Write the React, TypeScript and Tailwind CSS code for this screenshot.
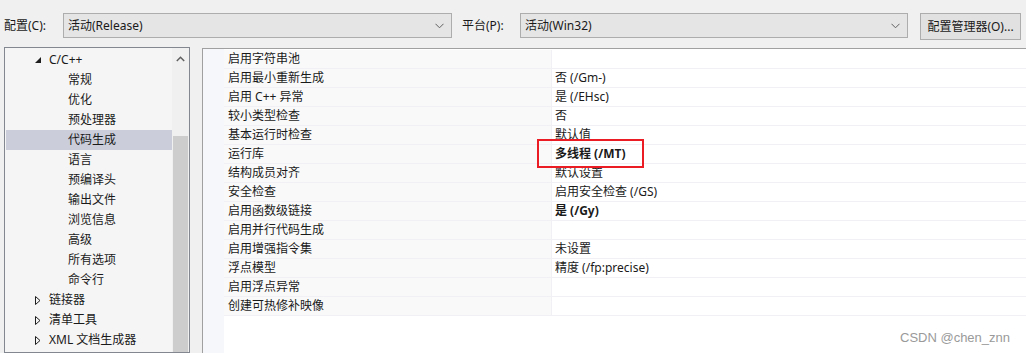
import React from "react";

const font = { fontFamily: '"Segoe UI", "Noto Sans", "Noto Sans CJK SC", sans-serif' };

const treeItems: { label: string; level: number; icon?: "open" | "closed"; selected?: boolean }[] = [
  { label: "C/C++", level: 1, icon: "open" },
  { label: "常规", level: 2 },
  { label: "优化", level: 2 },
  { label: "预处理器", level: 2 },
  { label: "代码生成", level: 2, selected: true },
  { label: "语言", level: 2 },
  { label: "预编译头", level: 2 },
  { label: "输出文件", level: 2 },
  { label: "浏览信息", level: 2 },
  { label: "高级", level: 2 },
  { label: "所有选项", level: 2 },
  { label: "命令行", level: 2 },
  { label: "链接器", level: 1, icon: "closed" },
  { label: "清单工具", level: 1, icon: "closed" },
  { label: "XML 文档生成器", level: 1, icon: "closed" },
];

const props: { name: string; value: string; bold?: boolean }[] = [
  { name: "启用字符串池", value: "" },
  { name: "启用最小重新生成", value: "否 (/Gm-)" },
  { name: "启用 C++ 异常", value: "是 (/EHsc)" },
  { name: "较小类型检查", value: "否" },
  { name: "基本运行时检查", value: "默认值" },
  { name: "运行库", value: "多线程 (/MT)", bold: true },
  { name: "结构成员对齐", value: "默认设置" },
  { name: "安全检查", value: "启用安全检查 (/GS)" },
  { name: "启用函数级链接", value: "是 (/Gy)", bold: true },
  { name: "启用并行代码生成", value: "" },
  { name: "启用增强指令集", value: "未设置" },
  { name: "浮点模型", value: "精度 (/fp:precise)" },
  { name: "启用浮点异常", value: "" },
  { name: "创建可热修补映像", value: "" },
];

function Chevron() {
  return (
    <svg width="9" height="6" viewBox="0 0 9 6" className="shrink-0">
      <path d="M0.5 0.8 L4.5 4.8 L8.5 0.8" fill="none" stroke="#606060" strokeWidth="1" />
    </svg>
  );
}

function Combo({ text, width }: { text: string; width: string }) {
  return (
    <div className={`${width} h-[25px] bg-[#e5e5e5] border border-[#adadad] flex items-center justify-between pl-[4px] pr-[7px] text-[12px] text-[#1a1a1a]`}>
      <span>{text}</span>
      <Chevron />
    </div>
  );
}

export default function App() {
  return (
    <div className="w-[1026px] h-[353px] bg-[#f0f0f0] overflow-hidden relative text-[#1a1a1a]" style={font}>
      {/* top bar */}
      <div className="h-[47px] flex items-start pt-[13px] pl-[4px] text-[12px]">
        <div className="w-[59px] h-[25px] flex items-center">配置(C):</div>
        <Combo text="活动(Release)" width="w-[389px]" />
        <div className="w-[58px] h-[25px] flex items-center ml-[10px]">平台(P):</div>
        <Combo text="活动(Win32)" width="w-[388px]" />
        <div className="ml-[12px] w-[101px] h-[27px] bg-[#e1e1e1] border border-[#adadad] flex items-center justify-center">
          配置管理器(O)...
        </div>
      </div>

      <div className="flex items-start">
        {/* left tree panel */}
        <div className="ml-[4px] w-[186px] h-[306px] border border-[#828790] bg-[#f5f5f5] flex">
          <div className="w-[167px] pt-[2px] pl-[1px]">
            {treeItems.map((t, i) => (
              <div
                key={i}
                className={`h-[20px] flex items-center text-[12px] ${t.selected ? "bg-[#cbcdda]" : ""}`}
              >
                {t.level === 1 ? (
                  <>
                    <div className="w-[43px] flex justify-end pr-[8px]">
                      {t.icon === "open" ? (
                        <svg width="6" height="6" viewBox="0 0 6 6">
                          <path d="M6 0 L6 6 L0 6 Z" fill="#1e1e1e" />
                        </svg>
                      ) : (
                        <svg width="6" height="9" viewBox="0 0 6 9">
                          <path d="M0.5 0.5 L5 4.5 L0.5 8.5 Z" fill="none" stroke="#1e1e1e" strokeWidth="1" />
                        </svg>
                      )}
                    </div>
                    <span>{t.label}</span>
                  </>
                ) : (
                  <span className="pl-[62px]">{t.label}</span>
                )}
              </div>
            ))}
          </div>
          <div className="w-[17px] bg-[#f0f0f0] flex flex-col">
            <div className="h-[20px] flex items-center justify-center pt-[2px]">
              <svg width="9" height="6" viewBox="0 0 9 6">
                <path d="M0.8 5 L4.5 1.3 L8.2 5" fill="none" stroke="#606060" strokeWidth="1.5" />
              </svg>
            </div>
            <div className="h-[68px]" />
            <div className="flex-1 mx-[1px] bg-[#cdcdcd]" />
          </div>
        </div>

        {/* right property grid */}
        <div className="ml-[12px] mt-[1px] flex-1 h-[305px] border-l border-t border-[#a0a0a0] bg-[#f7f7f7] flex">
          <div className="w-[21px] bg-[#f5f7fb]" />
          <div className="flex-1 pt-[1px] bg-white">
            {props.map((p, i) => (
              <div key={i} className="h-[19px] flex border-b border-[#f0f0f5] text-[12px]">
                <div className="w-[328px] pl-[4px] flex items-center bg-[#f9f9f9] border-r border-[#f0f0f5]">
                  {p.name}
                </div>
                <div className={`flex-1 pl-[3px] flex items-center ${p.bold ? "font-bold" : ""}`}>
                  {p.value}
                </div>
              </div>
            ))}
          </div>
        </div>
      </div>

      {/* red highlight box */}
      <div className="absolute left-[537px] top-[139px] w-[107px] h-[29px] border-2 border-[#ec1c24]" />

      {/* watermark */}
      <div className="absolute left-[900px] top-[328px] text-[13px] text-[#9a9a9a]" style={{ fontFamily: '"Liberation Sans", Arial, sans-serif' }}>
        CSDN @chen_znn
      </div>
    </div>
  );
}
